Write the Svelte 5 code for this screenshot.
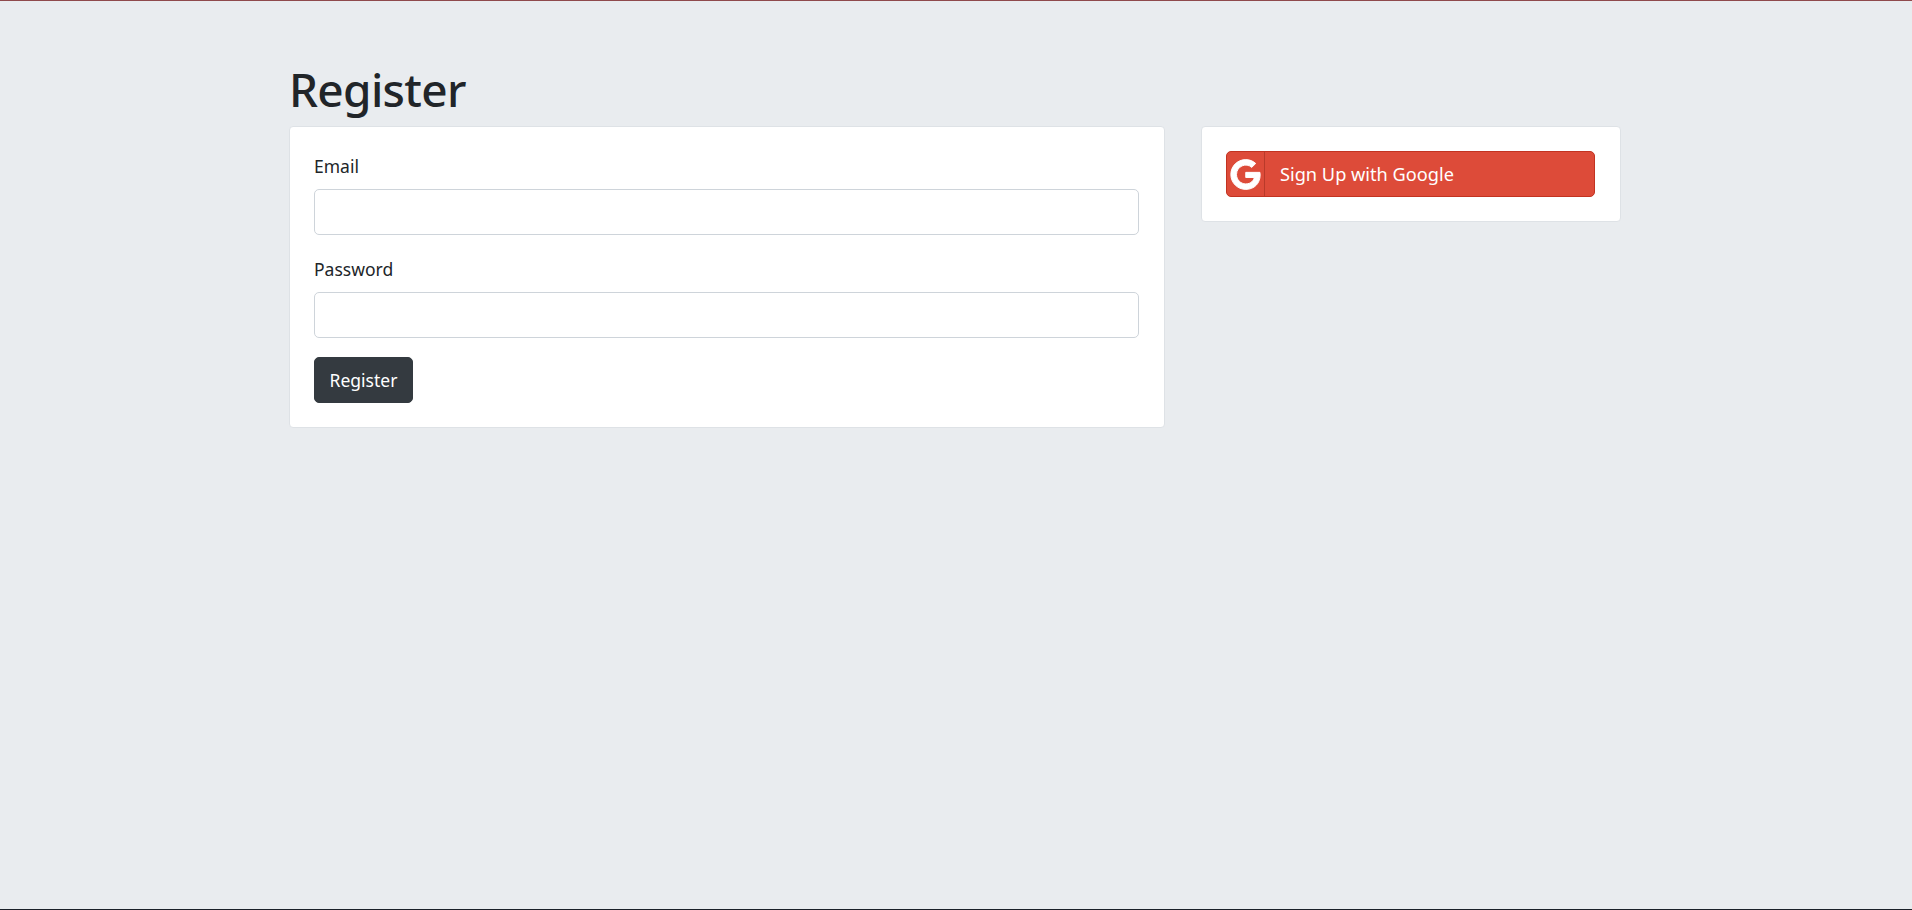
<script>
  let email = ''
  let password = ''
</script>

<div class="page">
  <div class="container">
    <h1>Register</h1>
    <div class="row">
      <form class="card" on:submit|preventDefault>
        <div class="field">
          <label for="email">Email</label>
          <input id="email" type="email" bind:value={email} />
        </div>
        <div class="field">
          <label for="password">Password</label>
          <input id="password" type="password" bind:value={password} />
        </div>
        <button class="btn-dark" type="submit">Register</button>
      </form>
      <div class="card">
        <button class="btn-google" type="button">
          <span class="google-icon">
            <svg viewBox="-10 -2 508 516" width="31" height="31" aria-hidden="true">
              <path fill="#fff" stroke="#fff" stroke-width="16" d="M488 261.8C488 403.3 391.1 504 248 504 110.8 504 0 393.2 0 256S110.8 8 248 8c66.8 0 123 24.5 166.3 64.9l-67.5 64.9C258.5 52.6 94.3 116.6 94.3 256c0 86.5 69.1 156.6 153.7 156.6 98.2 0 135-70.4 140.8-106.9H248v-85.3h236.1c2.3 12.7 3.9 24.9 3.9 41.4z" />
            </svg>
          </span>
          <span class="google-label">Sign Up with Google</span>
        </button>
      </div>
    </div>
  </div>
</div>

<style>
  :global(body) {
    margin: 0;
  }

  .page {
    box-sizing: border-box;
    height: 910px;
    background: #e9ecef;
    border-top: 1px solid #8f4a4c;
    border-bottom: 1px solid #1a2028;
    font-family: "Noto Sans", "Open Sans", sans-serif;
    font-size: 17.5px;
    color: #212529;
  }

  .container {
    width: 1332px;
    margin: 0 0 0 289px;
    padding-top: 57px;
  }

  h1 {
    margin: 0 0 6px;
    font-size: 46px;
    font-weight: 500;
    line-height: 62px;
    letter-spacing: -0.7px;
  }

  .row {
    display: grid;
    grid-template-columns: 876px 420px;
    gap: 36px;
    align-items: start;
  }

  .card {
    box-sizing: border-box;
    background: #fff;
    border: 1px solid #dee2e6;
    border-radius: 4px;
    padding: 24px 25px 24px 24px;
  }

  .field {
    margin-bottom: 19px;
  }

  label {
    display: block;
    height: 25px;
    padding-top: 3px;
    line-height: 25px;
    margin-bottom: 10px;
  }

  input {
    display: block;
    box-sizing: border-box;
    width: 100%;
    height: 46px;
    border: 1px solid #ced4da;
    border-radius: 5px;
    background: #fff;
  }

  .btn-dark {
    display: block;
    box-sizing: border-box;
    width: 99px;
    height: 46px;
    padding: 0;
    background: #343a40;
    border: 1px solid #343a40;
    border-radius: 5px;
    color: #fff;
    font: inherit;
  }

  .btn-google {
    display: flex;
    align-items: stretch;
    box-sizing: border-box;
    width: 369px;
    height: 46px;
    padding: 0;
    background: #dd4b39;
    border: 1px solid #c23321;
    border-radius: 5px;
    color: #fff;
    font: inherit;
    font-size: 18.2px;
  }

  .google-icon {
    display: flex;
    align-items: center;
    justify-content: center;
    box-sizing: border-box;
    width: 38px;
    border-right: 1px solid #b93a2a;
  }

  .google-label {
    align-self: center;
    margin-left: 15px;
    padding-bottom: 1px;
  }
</style>
